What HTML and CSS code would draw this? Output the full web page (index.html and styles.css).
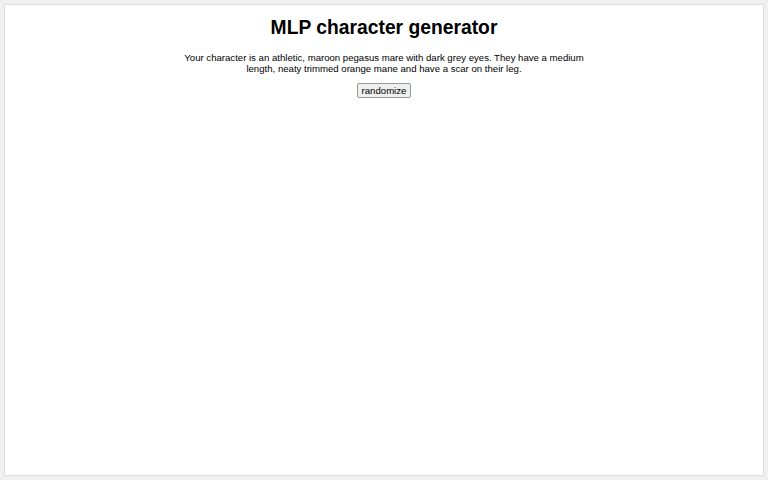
FILE: index.html
```html
<!DOCTYPE html>
<html lang="en">
<head>
  <meta charset="UTF-8" />
  <title>MLP character generator</title>
  <link rel="stylesheet" href="styles.css">
</head>
<body>
  <div id="page">
    <h1>MLP character generator</h1>
    <p id="result">Your character is an athletic, maroon pegasus mare with dark grey eyes. They have a medium length, neaty trimmed orange mane and have a scar on their leg.</p>
    <button id="randomBtn">randomize</button>
  </div>
</body>
</html>
```

FILE: styles.css
```css
* {
  margin: 0;
  padding: 0;
  box-sizing: border-box;
}

html, body {
  height: 100%;
}

body {
  background: #f0f0f0;
  font-family: "Liberation Sans", Arial, sans-serif;
  color: #000;
  padding: 4px;
}

#page {
  height: 100%;
  background: #fff;
  border: 1px solid #dcdcdc;
  display: flex;
  flex-direction: column;
  align-items: center;
  padding-top: 9px;
}

h1 {
  font-size: 19.3px;
  font-weight: bold;
  line-height: 28px;
}

#result {
  width: 404px;
  margin-top: 10px;
  font-size: 9.6px;
  line-height: 11px;
  text-align: center;
}

#randomBtn {
  margin-top: 9px;
  font-family: "Liberation Sans", Arial, sans-serif;
  font-size: 9.6px;
  padding: 1px 4px;
  background: #efefef;
  border: 1px solid #999;
  border-radius: 2px;
}
```
